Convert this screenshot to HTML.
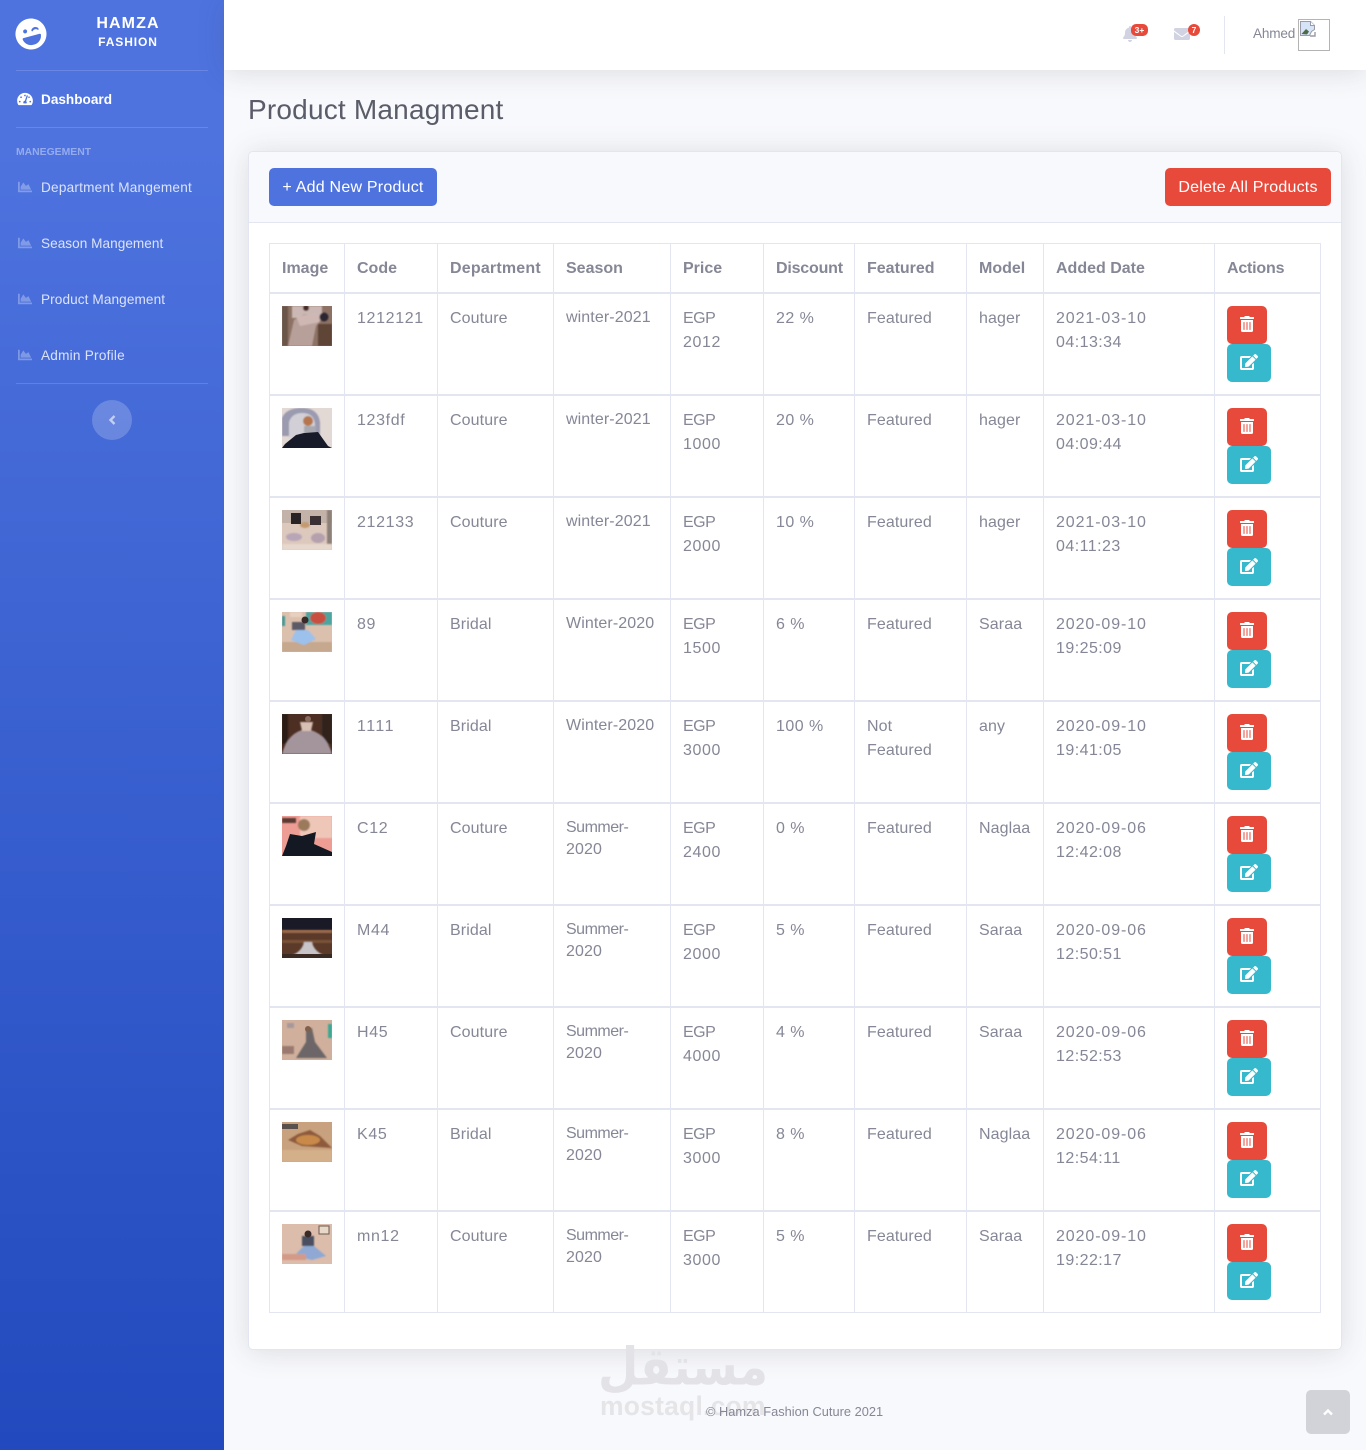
<!DOCTYPE html>
<html><head><meta charset="utf-8"><title>Product Managment</title>
<style>
*{box-sizing:border-box}
html,body{margin:0;padding:0}
body{width:1366px;height:1450px;position:relative;overflow:hidden;background:#f8f9fc;color:#858796;font-family:"Liberation Sans",sans-serif;font-size:16px;letter-spacing:.1px}
.abs{position:absolute;white-space:nowrap}
#side{position:absolute;left:0;top:0;width:224px;height:1450px;background:linear-gradient(180deg,#4e73df 10%,#224abe 100%)}
.hr{position:absolute;left:16px;width:192px;height:1px;background:rgba(255,255,255,.15)}
.nav{position:absolute;left:41px;font-size:13.6px;line-height:20px;color:rgba(255,255,255,.8);white-space:nowrap;letter-spacing:.22px}
.ni{position:absolute;left:18px;width:14px;height:14px;fill:rgba(255,255,255,.3)}
#top{position:absolute;left:224px;top:0;width:1142px;height:70px;background:#fff;box-shadow:0 .15rem 1.75rem 0 rgba(58,59,69,.15)}
#card{position:absolute;left:248px;top:151px;width:1094px;height:1199px;background:#fff;border:1px solid #e3e6f0;border-radius:5px;box-shadow:0 .15rem 1.75rem 0 rgba(58,59,69,.15)}
#chead{position:absolute;left:0;top:0;width:1092px;height:71px;background:#f8f9fc;border-bottom:1px solid #e3e6f0;border-radius:5px 5px 0 0}
.btn{position:absolute;height:38px;line-height:38px;color:#fff;text-align:center;border-radius:5px;font-size:16px;white-space:nowrap;letter-spacing:.22px}
table{position:absolute;left:269px;top:243px;width:1052px;table-layout:fixed;border-collapse:separate;border-spacing:0;border-right:1px solid #e3e6f0;border-bottom:1px solid #e3e6f0}
th,td{border-left:1px solid #e3e6f0;border-top:2px solid #e3e6f0;padding:13px 12px 0;vertical-align:top;text-align:left;line-height:24px;font-size:16px;color:#858796;overflow:visible}
th{border-top:1px solid #e3e6f0;height:49px;font-weight:700;padding-top:13px;letter-spacing:0}
td{height:102px}
td:first-child,td:last-child{padding-top:12px}
td.s{line-height:21.6px}
td.s span{letter-spacing:-.5px}
td.c{letter-spacing:.65px}
td.p{letter-spacing:-.5px}
td.p i{font-style:normal;letter-spacing:.6px}
td.i{letter-spacing:.45px}
td.t{letter-spacing:.9px}
td.t i{font-style:normal;letter-spacing:.45px}
.th{display:block;width:50px;height:40px}
.d,.e{display:block;width:40px;height:38px;background:#e74a3b;border-radius:5px;position:relative}
.e{width:44px;background:#36b9cc}
.d svg{position:absolute;left:13px;top:10px;width:14px;height:16px;fill:#fff}
.e svg{position:absolute;left:13px;top:10px;width:18px;height:16px;fill:#fff}
.badge{position:absolute;background:#e74a3b;color:#fff;font-size:8.5px;font-weight:700;text-align:center;height:12px;line-height:12px;border-radius:5px;letter-spacing:0}
</style></head><body>
<svg width="0" height="0" style="position:absolute">
<defs>
<filter id="b" x="-5%" y="-5%" width="110%" height="110%"><feGaussianBlur stdDeviation=".9"/></filter>
<symbol id="tr" viewBox="0 0 448 512"><path d="M32 464a48 48 0 0 0 48 48h288a48 48 0 0 0 48-48V128H32zm272-256a16 16 0 0 1 32 0v224a16 16 0 0 1-32 0zm-96 0a16 16 0 0 1 32 0v224a16 16 0 0 1-32 0zm-96 0a16 16 0 0 1 32 0v224a16 16 0 0 1-32 0zM432 32H312l-9.4-18.7A24 24 0 0 0 281.1 0H166.8a23.72 23.72 0 0 0-21.4 13.3L136 32H16A16 16 0 0 0 0 48v32a16 16 0 0 0 16 16h416a16 16 0 0 0 16-16V48a16 16 0 0 0-16-16z"/></symbol>
<symbol id="ed" viewBox="0 0 576 512"><path d="M402.6 83.2l90.2 90.2c3.8 3.8 3.8 10 0 13.8L274.4 405.6l-92.8 10.3c-12.4 1.4-22.9-9.1-21.5-21.5l10.3-92.8L388.8 83.2c3.8-3.8 10-3.8 13.8 0zm162-22.9l-48.8-48.8c-15.2-15.2-39.9-15.2-55.2 0l-35.4 35.4c-3.8 3.8-3.8 10 0 13.8l90.2 90.2c3.8 3.8 10 3.8 13.8 0l35.4-35.4c15.2-15.3 15.2-40 0-55.2zM384 346.2V448H64V128h229.8c3.2 0 6.2-1.3 8.5-3.5l40-40c7.6-7.6 2.2-20.5-8.5-20.5H48C21.5 64 0 85.5 0 112v352c0 26.5 21.5 48 48 48h352c26.5 0 48-21.5 48-48V306.2c0-10.7-12.9-16-20.5-8.5l-40 40c-2.2 2.3-3.5 5.3-3.5 8.5z"/></symbol>
<symbol id="ch" viewBox="0 0 512 512"><path d="M500 384c6.6 0 12 5.4 12 12v40c0 6.6-5.4 12-12 12H12c-6.6 0-12-5.4-12-12V76c0-6.6 5.4-12 12-12h40c6.6 0 12 5.4 12 12v308h436zM372.7 159.5L288 216l-85.3-113.7c-5.1-6.8-15.5-6.3-19.9 1L96 248v104h384l-89.9-187.8c-3.2-6.5-11.4-8.7-17.4-4.7z"/></symbol>
</defs></svg>

<div id="side">
<svg class="abs" style="left:15px;top:18px;transform:rotate(-15deg)" width="32" height="32" viewBox="0 0 496 512" fill="#fff"><path d="M248 8C111 8 0 119 0 256s111 248 248 248 248-111 248-248S385 8 248 8zm20.1 198.1c4-25.2 34.2-42.1 59.9-42.1s55.9 16.9 59.9 42.1c1.7 11.1-11.4 18.3-19.8 10.8l-9.5-8.5c-14.8-13.2-46.2-13.2-61 0L288 217c-8.4 7.4-21.6.3-19.9-10.9zM168 160c17.7 0 32 14.3 32 32s-14.3 32-32 32-32-14.3-32-32 14.3-32 32-32zm230.9 146C390 377 329.4 432 256 432h-16c-73.4 0-134-55-142.9-126-1.2-9.5 6.3-18 15.9-18h270c9.6 0 17.1 8.4 15.9 18z"/></svg>
<div class="abs" style="left:64px;width:128px;top:14px;text-align:center;color:#fff;font-weight:700;font-size:16px;line-height:19px;letter-spacing:1.1px">HAMZA</div>
<div class="abs" style="left:64px;width:128px;top:34px;text-align:center;color:#fff;font-weight:700;font-size:12px;line-height:16px;letter-spacing:.9px">FASHION</div>
<div class="hr" style="top:70px"></div>
<svg class="abs" style="left:17px;top:92px" width="16" height="14" viewBox="0 0 576 512" fill="#fff"><path d="M288 32C128.94 32 0 160.94 0 320c0 52.8 14.25 102.26 39.06 144.8 5.61 9.62 16.3 15.2 27.44 15.2h443c11.14 0 21.83-5.58 27.44-15.2C561.75 422.26 576 372.8 576 320c0-159.06-128.94-288-288-288zm0 64c14.71 0 26.58 10.13 30.32 23.65-1.11 2.26-2.64 4.23-3.45 6.67l-9.22 27.67c-5.13 3.49-10.97 6.01-17.64 6.01-17.67 0-32-14.33-32-32S270.33 96 288 96zM96 384c-17.67 0-32-14.33-32-32s14.33-32 32-32 32 14.33 32 32-14.33 32-32 32zm48-160c-17.67 0-32-14.33-32-32s14.33-32 32-32 32 14.33 32 32-14.33 32-32 32zm246.77-72.41l-61.33 184C343.13 347.33 352 364.54 352 384c0 11.72-3.38 22.55-8.88 32H232.88c-5.5-9.45-8.88-20.28-8.88-32 0-33.94 26.5-61.43 59.9-63.59l61.34-184.01c4.17-12.56 17.73-19.45 30.36-15.17 12.57 4.19 19.35 17.79 15.17 30.36zm14.66 57.2l15.52-46.55c3.47-1.29 7.13-2.23 11.05-2.23 17.67 0 32 14.33 32 32s-14.33 32-32 32c-11.38-.01-20.89-6.28-26.57-15.22zM480 384c-17.67 0-32-14.33-32-32s14.33-32 32-32 32 14.33 32 32-14.33 32-32 32z"/></svg>
<div class="nav" style="top:90px;color:#fff;font-weight:700;letter-spacing:0">Dashboard</div>
<div class="hr" style="top:127px"></div>
<div class="abs" style="left:16px;top:146px;font-size:10.4px;line-height:13px;font-weight:700;color:rgba(255,255,255,.4);letter-spacing:0">MANEGEMENT</div>
<svg class="ni" style="top:180px"><use href="#ch"/></svg><div class="nav" style="top:178px">Department Mangement</div>
<svg class="ni" style="top:236px"><use href="#ch"/></svg><div class="nav" style="top:234px;letter-spacing:.04px">Season Mangement</div>
<svg class="ni" style="top:292px"><use href="#ch"/></svg><div class="nav" style="top:290px;letter-spacing:.1px">Product Mangement</div>
<svg class="ni" style="top:348px"><use href="#ch"/></svg><div class="nav" style="top:346px;letter-spacing:.24px">Admin Profile</div>
<div class="hr" style="top:383px"></div>
<div class="abs" style="left:92px;top:400px;width:40px;height:40px;border-radius:50%;background:rgba(255,255,255,.2)"></div>
<svg class="abs" style="left:107px;top:414px" width="10" height="12" viewBox="0 0 10 12"><path d="M7.5 2 3.5 6l4 4" fill="none" stroke="rgba(255,255,255,.6)" stroke-width="2.4"/></svg>
</div>

<div id="top"></div>
<svg class="abs" style="left:1123px;top:26px" width="14" height="16" viewBox="0 0 448 512" fill="#d1d3e2"><path d="M224 512c35.32 0 63.97-28.65 63.97-64H160.03c0 35.35 28.65 64 63.97 64zm215.39-149.71c-19.32-20.76-55.47-51.99-55.47-154.29 0-77.7-54.48-139.9-127.94-155.16V32c0-17.67-14.32-32-31.98-32s-31.98 14.33-31.98 32v20.84C118.56 68.1 64.08 130.3 64.08 208c0 102.3-36.15 133.53-55.47 154.29-6 6.45-8.66 14.16-8.61 21.71.11 16.4 12.98 32 32.1 32h383.8c19.12 0 32-15.6 32.1-32 .05-7.55-2.61-15.27-8.61-21.71z"/></svg>
<div class="badge" style="left:1131px;top:24px;width:17px">3+</div>
<svg class="abs" style="left:1174px;top:26px" width="16" height="16" viewBox="0 0 512 512" fill="#d1d3e2"><path d="M502.3 190.8c3.9-3.1 9.7-.2 9.7 4.7V400c0 26.5-21.5 48-48 48H48c-26.5 0-48-21.5-48-48V195.6c0-5 5.7-7.8 9.7-4.7 22.4 17.4 52.1 39.5 154.1 113.6 21.1 15.4 56.7 47.8 92.2 47.6 35.7.3 72-32.8 92.3-47.6 102-74.1 131.6-96.3 154-113.7zM256 320c23.2.4 56.6-29.2 73.4-41.4 132.7-96.3 142.8-104.7 173.4-128.7 5.8-4.5 9.2-11.5 9.2-18.9v-19c0-26.5-21.5-48-48-48H48C21.5 64 0 85.5 0 112v19c0 7.4 3.4 14.3 9.2 18.9 30.6 23.9 40.7 32.4 173.4 128.7 16.8 12.2 50.2 41.8 73.4 41.4z"/></svg>
<div class="badge" style="left:1188px;top:24px;width:12px;border-radius:6px">7</div>
<div class="abs" style="left:1224px;top:16px;width:1px;height:38px;background:#e3e6f0"></div>
<div class="abs" style="left:1253px;top:24px;font-size:13.6px;line-height:20px;color:#858796;letter-spacing:-.2px">Ahmed</div>
<div class="abs" style="left:1298px;top:19px;width:32px;height:32px;border:1px solid #b4b4b4;background:#fff"></div>
<svg class="abs" style="left:1300px;top:21px" width="16" height="16" viewBox="0 0 16 16"><path d="M.5.500h10l4 4v4l-3 2-2 4H.5z" fill="#d6e4f7" stroke="#9a9aa8"/><path d="M1.500 13 6 8l3 2.500-2 3z" fill="#4f6b45"/><path d="M10.500.500v4h4" fill="#fff" stroke="#9a9aa8"/><path d="M15 11v4h-5" fill="none" stroke="#9a9aa8" stroke-width="1.400"/></svg>

<div class="abs" style="left:248px;top:91px;font-size:28px;line-height:38px;color:#5a5c69;letter-spacing:.2px">Product Managment</div>

<div id="card"><div id="chead"></div></div>

<div class="abs" style="left:533px;width:300px;top:1322px;text-align:center;transform-origin:50% 71px;transform:scale(.75,.84);font-family:'DejaVu Sans',sans-serif;font-weight:700;font-size:62px;line-height:80px;color:#e3e3e7;letter-spacing:0">مستقل</div>
<div class="abs" style="left:600px;top:1388px;font-family:'Liberation Sans',sans-serif;font-weight:700;font-size:26.5px;line-height:36px;color:#e5e5e8;letter-spacing:.2px">mostaql.com</div>

<div class="btn" style="left:269px;top:168px;width:168px;background:#4e73df;border:1px solid #4e73df">+ Add New Product</div>
<div class="btn" style="left:1165px;top:168px;width:166px;background:#e74a3b;border:1px solid #e74a3b">Delete All Products</div>

<table>
<colgroup><col style="width:75px"><col style="width:93px"><col style="width:116px"><col style="width:117px"><col style="width:93px"><col style="width:91px"><col style="width:112px"><col style="width:77px"><col style="width:171px"><col style="width:106px"></colgroup>
<thead><tr><th>Image</th><th>Code</th><th style="letter-spacing:.2px">Department</th><th>Season</th><th>Price</th><th style="letter-spacing:-.2px">Discount</th><th>Featured</th><th>Model</th><th>Added Date</th><th style="letter-spacing:-.2px">Actions</th></tr></thead>
<tbody>
<tr><td><svg class="th" viewBox="0 0 50 40"><rect width="50" height="40" fill="#8d7264"/><g filter="url(#b)"><rect x="10" y="0" width="30" height="12" fill="#cbb8b4"/><rect x="0" y="0" width="6" height="40" fill="#6b5448"/><rect x="36" y="18" width="14" height="22" fill="#5f4434"/><path d="M6 40 12 14 22 8 40 12 34 20 30 40z" fill="#b8a09a"/><path d="M14 10 36 8 38 16 18 20z" fill="#cfb8b4"/><circle cx="42" cy="11" r="4.500" fill="#2c2530"/><circle cx="24" cy="2" r="3" fill="#4a2c28"/></g></svg></td><td class="c">1212121</td><td>Couture</td><td class="s">winter-2021</td><td class="p">EGP<br><i>2012</i></td><td class="i">22 %</td><td>Featured</td><td>hager</td><td class="t">2021-03-10<br><i>04:13:34</i></td><td><span class="d"><svg><use href="#tr"/></svg></span><span class="e"><svg><use href="#ed"/></svg></span></td></tr>
<tr><td><svg class="th" viewBox="0 0 50 40"><rect width="50" height="40" fill="#e2d8d4"/><g filter="url(#b)"><path d="M0 34V10Q4 0 20 0 36 0 38 14V28H0z" fill="#9a9ab0"/><path d="M7 30V14Q10 5 20 5 32 5 33 16V26z" fill="#d2d0d6"/><circle cx="26" cy="13" r="5" fill="#b5764d"/><rect x="22" y="18" width="12" height="7" fill="#a8a8b0"/></g><path d="M0 40 3 36 14 27 22 25 36 24 46 38 50 40z" fill="#171a28"/></svg></td><td class="c">123fdf</td><td>Couture</td><td class="s">winter-2021</td><td class="p">EGP<br><i>1000</i></td><td class="i">20 %</td><td>Featured</td><td>hager</td><td class="t">2021-03-10<br><i>04:09:44</i></td><td><span class="d"><svg><use href="#tr"/></svg></span><span class="e"><svg><use href="#ed"/></svg></span></td></tr>
<tr><td><svg class="th" viewBox="0 0 50 40"><rect width="50" height="40" fill="#dcc8bc"/><rect width="50" height="13" fill="#c2b2a8"/><g filter="url(#b)"><rect x="45" y="0" width="5" height="40" fill="#8d8078"/><ellipse cx="12" cy="27" rx="8" ry="4" fill="#b8a6b8"/><ellipse cx="36" cy="28" rx="7" ry="5" fill="#b5a0ae"/><ellipse cx="23" cy="15" rx="5" ry="3" fill="#c49a70"/><rect x="0" y="34" width="50" height="6" fill="#e6d8cc"/></g><rect x="9" y="3" width="10" height="11" fill="#2a2326"/><rect x="28" y="6" width="11" height="9" fill="#3a3033"/></svg></td><td class="c">212133</td><td>Couture</td><td class="s">winter-2021</td><td class="p">EGP<br><i>2000</i></td><td class="i">10 %</td><td>Featured</td><td>hager</td><td class="t">2021-03-10<br><i>04:11:23</i></td><td><span class="d"><svg><use href="#tr"/></svg></span><span class="e"><svg><use href="#ed"/></svg></span></td></tr>
<tr><td><svg class="th" viewBox="0 0 50 40"><rect width="50" height="40" fill="#dcc0ae"/><g filter="url(#b)"><rect x="24" y="0" width="26" height="13" fill="#4aa5a0"/><ellipse cx="36" cy="6" rx="8" ry="6" fill="#c8503f"/><rect x="0" y="4" width="3" height="10" fill="#3e9a96"/><rect x="8" y="0" width="12" height="5" fill="#e8d0c0"/><rect x="0" y="30" width="50" height="10" fill="#c5a88e"/><path d="M9 28 14 18h12l8 9-12 6z" fill="#9cc1ec"/><rect x="10" y="10" width="13" height="8" fill="#5b5a66"/></g><circle cx="23" cy="8" r="3.500" fill="#3a2a28"/></svg></td><td class="c">89</td><td>Bridal</td><td class="s">Winter-2020</td><td class="p">EGP<br><i>1500</i></td><td class="i">6 %</td><td>Featured</td><td>Saraa</td><td class="t">2020-09-10<br><i>19:25:09</i></td><td><span class="d"><svg><use href="#tr"/></svg></span><span class="e"><svg><use href="#ed"/></svg></span></td></tr>
<tr><td><svg class="th" viewBox="0 0 50 40"><rect width="50" height="40" fill="#4c2f22"/><g filter="url(#b)"><rect x="0" y="0" width="6" height="30" fill="#2c1c15"/><rect x="40" y="0" width="10" height="30" fill="#33221a"/><path d="M0 40Q6 18 24 15 44 18 50 40z" fill="#a4949c"/><path d="M18 8h13l-2 9h-9z" fill="#d8c0b4"/></g><circle cx="26" cy="5" r="3" fill="#8a6a5e"/></svg></td><td class="c" style="letter-spacing:1.5px">1111</td><td>Bridal</td><td class="s">Winter-2020</td><td class="p">EGP<br><i>3000</i></td><td class="i">100 %</td><td>Not<br>Featured</td><td>any</td><td class="t">2020-09-10<br><i>19:41:05</i></td><td><span class="d"><svg><use href="#tr"/></svg></span><span class="e"><svg><use href="#ed"/></svg></span></td></tr>
<tr><td><svg class="th" viewBox="0 0 50 40"><rect width="50" height="40" fill="#ee9d94"/><g filter="url(#b)"><rect x="18" y="0" width="32" height="22" fill="#efc7b8"/><circle cx="22" cy="9" r="6" fill="#9b7a5c"/><rect x="0" y="2" width="14" height="5" fill="#5a3a32"/></g><path d="M0 40 4 30 8 18 20 20 34 16 32 28 50 36V40z" fill="#141822"/></svg></td><td class="c">C12</td><td>Couture</td><td class="s"><span>Summer-</span><br>2020</td><td class="p">EGP<br><i>2400</i></td><td class="i">0 %</td><td>Featured</td><td>Naglaa</td><td class="t">2020-09-06<br><i>12:42:08</i></td><td><span class="d"><svg><use href="#tr"/></svg></span><span class="e"><svg><use href="#ed"/></svg></span></td></tr>
<tr><td><svg class="th" viewBox="0 0 50 40"><rect width="50" height="40" fill="#1a1a26"/><rect y="12" width="50" height="28" fill="#5b3a2a"/><g filter="url(#b)"><rect y="12" width="50" height="3" fill="#9a6a48"/><rect y="22" width="50" height="3" fill="#7a5238"/><path d="M8 38Q20 34 22 24h8q2 10 14 14z" fill="#c8c4c8"/></g><rect y="36" width="50" height="4" fill="#3a2a24"/></svg></td><td class="c">M44</td><td>Bridal</td><td class="s"><span>Summer-</span><br>2020</td><td class="p">EGP<br><i>2000</i></td><td class="i">5 %</td><td>Featured</td><td>Saraa</td><td class="t">2020-09-06<br><i>12:50:51</i></td><td><span class="d"><svg><use href="#tr"/></svg></span><span class="e"><svg><use href="#ed"/></svg></span></td></tr>
<tr><td><svg class="th" viewBox="0 0 50 40"><rect width="50" height="40" fill="#d0b09c"/><g filter="url(#b)"><rect x="46" y="4" width="4" height="14" fill="#3aa894"/><rect x="0" y="26" width="12" height="8" fill="#9a7a70"/><rect x="5" y="3" width="7" height="5" fill="#a8989a"/><path d="M14 38 24 22l0-14 6 0 3 14 12 16z" fill="#6d6668"/></g><circle cx="26" cy="9" r="3" fill="#80604c"/></svg></td><td class="c">H45</td><td>Couture</td><td class="s"><span>Summer-</span><br>2020</td><td class="p">EGP<br><i>4000</i></td><td class="i">4 %</td><td>Featured</td><td>Saraa</td><td class="t">2020-09-06<br><i>12:52:53</i></td><td><span class="d"><svg><use href="#tr"/></svg></span><span class="e"><svg><use href="#ed"/></svg></span></td></tr>
<tr><td><svg class="th" viewBox="0 0 50 40"><rect width="50" height="40" fill="#c8a27e"/><g filter="url(#b)"><path d="M6 18 16 12 28 8 38 14 50 26 20 24z" fill="#8e5a3e"/><ellipse cx="26" cy="18" rx="12" ry="5" fill="#c98a4a"/><rect y="28" width="50" height="12" fill="#d4b08a"/></g><rect y="2" width="16" height="5" fill="#58504c"/></svg></td><td class="c">K45</td><td>Bridal</td><td class="s"><span>Summer-</span><br>2020</td><td class="p">EGP<br><i>3000</i></td><td class="i">8 %</td><td>Featured</td><td>Naglaa</td><td class="t">2020-09-06<br><i>12:54:11</i></td><td><span class="d"><svg><use href="#tr"/></svg></span><span class="e"><svg><use href="#ed"/></svg></span></td></tr>
<tr><td><svg class="th" viewBox="0 0 50 40"><rect width="50" height="40" fill="#dcbcaa"/><g filter="url(#b)"><path d="M12 32 22 22h10l12 10-14 4z" fill="#8fa8d4"/><rect x="20" y="12" width="12" height="10" fill="#485060"/><rect x="0" y="30" width="24" height="6" fill="#d49a88"/></g><rect x="37" y="2" width="10" height="8" fill="#e8d8c8" stroke="#6a5a50"/><circle cx="26" cy="10" r="3.500" fill="#3a2a28"/></svg></td><td class="c">mn12</td><td>Couture</td><td class="s"><span>Summer-</span><br>2020</td><td class="p">EGP<br><i>3000</i></td><td class="i">5 %</td><td>Featured</td><td>Saraa</td><td class="t">2020-09-10<br><i>19:22:17</i></td><td><span class="d"><svg><use href="#tr"/></svg></span><span class="e"><svg><use href="#ed"/></svg></span></td></tr>
</tbody></table>

<div class="abs" style="left:706px;top:1403px;font-size:12.8px;line-height:18px;color:#858796;letter-spacing:.02px">© Hamza Fashion Cuture 2021</div>
<div class="abs" style="left:1306px;top:1390px;width:44px;height:44px;border-radius:5px;background:#d2d3d9"></div>
<svg class="abs" style="left:1322px;top:1407px" width="12" height="10" viewBox="0 0 12 10"><path d="M2 7.500 6 3.500l4 4" fill="none" stroke="#fff" stroke-width="2.400"/></svg>
</body></html>
